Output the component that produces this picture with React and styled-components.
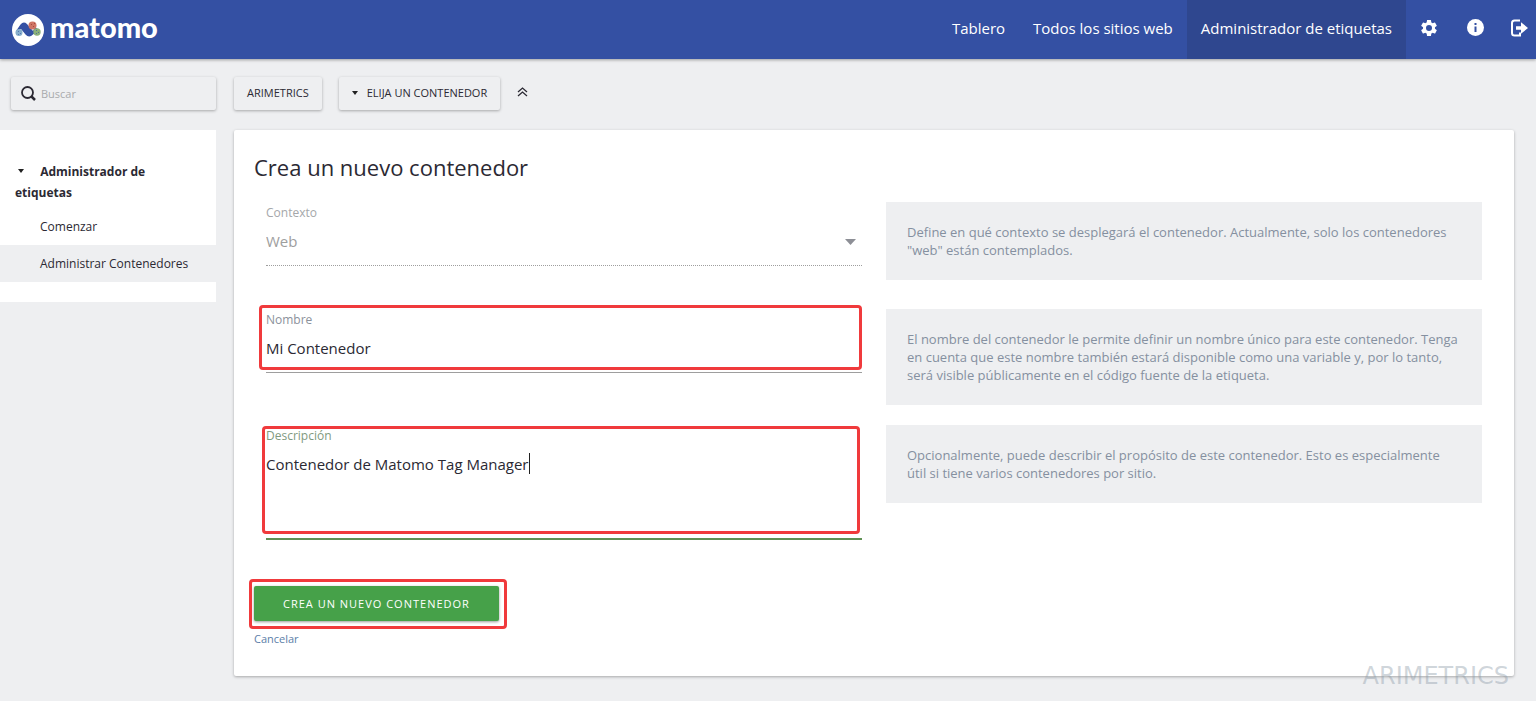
import React from 'react';
import styled, { createGlobalStyle } from 'styled-components';

const GlobalStyle = createGlobalStyle`
    *, *::before, *::after {
        box-sizing: border-box;
    }
    body {
        margin: 0;
        min-height: 100vh;
        background-color: #eeeff1;
        color: #2b2933;
        font-family: "Open Sans", "Noto Sans", sans-serif;
        font-size: 13px;
    }
    a {
        color: inherit;
        text-decoration: none;
    }
    button, input, select, textarea {
        font-family: inherit;
    }
`

const NavBar = styled.header`
    display: flex;
    justify-content: space-between;
    height: 59px;
    background-color: #3450a3;
    color: #fff;
    box-shadow: 0 1px 3px rgba(0, 0, 0, 0.35);
`

const Brand = styled.a`
    display: flex;
    align-items: center;
    gap: 6px;
    padding-left: 12px;
`

const BrandName = styled.span`
    padding-bottom: 6px;
    font-family: Lato, sans-serif;
    font-size: 29px;
    font-weight: 900;
    line-height: 32px;
`

const Menu = styled.nav`
    display: flex;
`

const MenuLink = styled.a`
    display: flex;
    align-items: center;
    padding: 0 14px 4px;
    font-size: 15px;
    background-color: ${({ $active }) => ($active ? '#2f478f' : 'transparent')};
`

const IconLink = styled.a`
    display: flex;
    align-items: center;
    justify-content: center;
    width: 46px;
    padding-bottom: 4px;

    &:last-child {
        justify-content: flex-end;
        width: 38px;
        padding-right: 8px;
    }
`

const Page = styled.div`
    display: grid;
    grid-template-columns: 216px 1fr;
    gap: 20px 18px;
    padding: 18px 22px 24px 0;
`

const SearchBox = styled.label`
    display: flex;
    align-items: center;
    gap: 5px;
    height: 33px;
    margin-left: 11px;
    padding-left: 10px;
    border-radius: 2px;
    box-shadow: 0 1px 3px rgba(0, 0, 0, 0.3);
`

const SearchInput = styled.input`
    flex: 1;
    min-width: 0;
    padding: 0;
    border: 0;
    outline: 0;
    background: none;
    font-size: 11px;

    &::placeholder {
        color: #a9abad;
    }
`

const Toolbar = styled.div`
    display: flex;
    align-items: center;
    gap: 17px;
`

const ToolButton = styled.button`
    display: flex;
    align-items: center;
    gap: 9px;
    height: 33px;
    padding: 0 13px 2px;
    border: 0;
    border-radius: 2px;
    background-color: #eeeff1;
    box-shadow: 0 1px 3px rgba(0, 0, 0, 0.3);
    color: #2b2933;
    font-size: 11px;
    text-transform: uppercase;
`

const CollapseButton = styled.button`
    display: flex;
    padding: 0 0 4px;
    border: 0;
    background: none;
`

const SideNav = styled.aside`
    align-self: start;
    padding: 31px 0 20px;
    background-color: #fff;
`

const SideTitle = styled.div`
    padding: 0 60px 5px 15px;
    font-weight: 700;
    font-size: 12px;
    line-height: 21px;

    svg {
        margin: 0 13px 3px 3px;
    }
`

const SideLink = styled.a`
    display: block;
    padding-left: 40px;
    font-size: 12px;
    line-height: 37px;
    background-color: ${({ $active }) => ($active ? '#eeeff1' : 'transparent')};
`

const Card = styled.main`
    padding: 22px 20px 27px;
    border-radius: 2px;
    background-color: #fff;
    box-shadow: 0 1px 3px rgba(0, 0, 0, 0.3);
`

const CardTitle = styled.h2`
    margin: 0 0 20px;
    font-size: 22px;
    font-weight: 400;
    line-height: 30px;
`

const Row = styled.div`
    display: grid;
    grid-template-columns: 1fr 1fr;
    align-items: start;
    gap: 24px;
    padding: 0 12px 20px;
`

// red frame laid over the part of the form to fill in
const Marked = styled.div`
    position: relative;

    &::after {
        content: "";
        position: absolute;
        inset: ${({ $inset }) => $inset};
        border: 3px solid #f03a3c;
        border-radius: 4px;
        pointer-events: none;
    }
`

const Field = styled(Marked)`
    margin-bottom: 23px;

    &::after {
        display: ${({ $inset }) => ($inset ? 'block' : 'none')};
    }
`

const FieldLabel = styled.label`
    display: block;
    height: 22px;
    color: ${({ $color }) => $color || '#8b919b'};
    font-size: 12px;
    line-height: 22px;
`

const Select = styled.select`
    display: block;
    width: 100%;
    height: 42px;
    padding: 0 0 8px;
    border: 0;
    border-bottom: 1px dotted #9e9e9e;
    border-radius: 0;
    background: none;
    appearance: none;
    color: #9e9e9e;
    font-size: 15px;
    opacity: 1;
`

const SelectArrow = styled.svg`
    position: absolute;
    top: 37px;
    right: 6px;
`

const TextInput = styled.input`
    display: block;
    width: 100%;
    height: 42px;
    padding: 0 0 8px;
    border: 0;
    border-bottom: 1px solid #9e9e9e;
    outline: 0;
    background: none;
    color: #2b2933;
    font-size: 15px;
`

const TextArea = styled.textarea`
    display: block;
    width: 100%;
    height: 93px;
    padding: 6px 0;
    border: 0;
    border-bottom: 2px solid #5f9154;
    outline: 0;
    background: none;
    resize: none;
    color: #2b2933;
    font-size: 15px;
    line-height: 22px;
`

const Caret = styled.span`
    position: absolute;
    top: 28px;
    left: 0;
    height: 21px;
    border-right: 1px solid #212121;
    color: transparent;
    font-size: 15px;
    pointer-events: none;

    &::before {
        content: "${({ $text }) => $text}";
    }
`

const Help = styled.p`
    margin: 0;
    padding: 21px;
    background-color: #eeeff1;
    color: #8590a0;
    font-size: 13px;
    line-height: 18px;
`

const Actions = styled.div`
    display: flex;
    flex-direction: column;
    align-items: flex-start;
    gap: 8px;
    padding-top: 3px;
`

const SubmitButton = styled.button`
    display: block;
    height: 35px;
    padding: 0 29px;
    border: 0;
    border-radius: 2px;
    background-color: #46a149;
    box-shadow: 0 1px 3px rgba(0, 0, 0, 0.4);
    color: #fff;
    font-size: 11px;
    letter-spacing: 1px;
    text-transform: uppercase;
`

const CancelLink = styled.a`
    color: #5c7ea8;
    font-size: 11px;
    line-height: 20px;
`

const Watermark = styled.div`
    position: absolute;
    right: 27px;
    bottom: 12px;
    color: rgba(140, 155, 168, 0.42);
    font-family: "DejaVu Sans", sans-serif;
    font-size: 24px;
    line-height: 26px;
`

const Logo = () => (
    <svg width="32" height="32" viewBox="0 0 32 32">
        <circle cx="16" cy="16" r="16" fill="#fff" />
        <path d="M4 17 L8.500 10.500 Q11.500 7 15 10 L21 17 L23 13 L27 16 L21 20.500 Q17 24.500 13.500 20.500 L9 15 Z" fill="#3450a3" />
        <circle cx="7" cy="18.500" r="3.500" fill="#86aecb" />
        <circle cx="20.500" cy="11.500" r="4" fill="#cf7565" />
        <circle cx="25" cy="18" r="3.700" fill="#8bb07a" />
        <g fill="#3450a3" opacity="0.6">
            <path d="M6 17h1v1H6zM8 19h1v1H8zM6 20h1v1H6zM24 16h1v1h-1zM26 18h1v1h-1zM24 19h1v1h-1z" />
        </g>
        <path d="M19 10h1v1h-1zM21 12h1v1h-1zM22 9h1v1h-1z" fill="#a8483d" />
    </svg>
)

const Triangle = () => (
    <svg width="6" height="4" viewBox="0 0 6 4">
        <path d="M0 0h6L3 4z" fill="#212121" />
    </svg>
)

const HELP = {
    context: 'Define en qué contexto se desplegará el contenedor. Actualmente, solo los contenedores "web" están contemplados.',
    name: 'El nombre del contenedor le permite definir un nombre único para este contenedor. Tenga en cuenta que este nombre también estará disponible como una variable y, por lo tanto, será visible públicamente en el código fuente de la etiqueta.',
    description: 'Opcionalmente, puede describir el propósito de este contenedor. Esto es especialmente útil si tiene varios contenedores por sitio.',
}

const Header = () => (
    <NavBar>
        <Brand href="#">
            <Logo />
            <BrandName>matomo</BrandName>
        </Brand>
        <Menu>
            <MenuLink href="#">Tablero</MenuLink>
            <MenuLink href="#">Todos los sitios web</MenuLink>
            <MenuLink href="#" $active>Administrador de etiquetas</MenuLink>
            <IconLink href="#" aria-label="Administración">
                <svg width="20" height="20" viewBox="0 0 24 24" fill="#fff">
                    <path d="M19.14 12.94c.04-.3.06-.61.06-.94 0-.32-.02-.64-.07-.94l2.03-1.58a.49.49 0 0 0 .12-.61l-1.92-3.32a.49.49 0 0 0-.59-.22l-2.39.96c-.5-.38-1.03-.7-1.62-.94l-.36-2.54a.48.48 0 0 0-.48-.41h-3.84c-.24 0-.43.17-.47.41l-.36 2.54c-.59.24-1.13.57-1.62.94l-2.39-.96a.49.49 0 0 0-.59.22L2.74 8.87c-.12.21-.08.47.12.61l2.03 1.58c-.05.3-.09.63-.09.94s.02.64.07.94l-2.03 1.58a.49.49 0 0 0-.12.61l1.92 3.32c.12.22.37.29.59.22l2.39-.96c.5.38 1.03.7 1.62.94l.36 2.54c.05.24.24.41.48.41h3.84c.24 0 .44-.17.47-.41l.36-2.54c.59-.24 1.13-.56 1.62-.94l2.39.96c.22.08.47 0 .59-.22l1.92-3.32a.49.49 0 0 0-.12-.61zM12 15.600a3.600 3.600 0 1 1 0-7.200 3.600 3.600 0 0 1 0 7.200z" />
                </svg>
            </IconLink>
            <IconLink href="#" aria-label="Ayuda">
                <svg width="17" height="17" viewBox="0 0 17 17">
                    <circle cx="8.500" cy="8.500" r="8.500" fill="#fff" />
                    <path d="M7.500 4h2v2h-2zM7.500 7.500h2V13h-2z" fill="#3450a3" />
                </svg>
            </IconLink>
            <IconLink href="#" aria-label="Salir">
                <svg width="17" height="18" viewBox="0 0 17 18">
                    <path d="M9 1.500H3.500Q1 1.500 1 4v10Q1 16.500 3.500 16.500H9v-3" fill="none" stroke="#fff" strokeWidth="2" />
                    <path d="M5 7.300h5V3.200l7 5.800-7 5.800v-4.100H5z" fill="#fff" />
                </svg>
            </IconLink>
        </Menu>
    </NavBar>
)

const SideMenu = () => (
    <SideNav>
        <SideTitle>
            <Triangle />
            {' '}Administrador de etiquetas
        </SideTitle>
        <SideLink href="#">Comenzar</SideLink>
        <SideLink href="#" $active>Administrar Contenedores</SideLink>
    </SideNav>
)

const ContainerForm = () => {
    const [description, setDescription] = React.useState('Contenedor de Matomo Tag Manager')

    return (
        <Card>
            <CardTitle>Crea un nuevo contenedor</CardTitle>
            <Row>
                <Field>
                    <FieldLabel htmlFor="context" $color="#a5a7aa">Contexto</FieldLabel>
                    <Select id="context" disabled>
                        <option>Web</option>
                    </Select>
                    <SelectArrow width="11" height="6" viewBox="0 0 11 6">
                        <path d="M0 0h11L5.500 6z" fill="#8d8f96" />
                    </SelectArrow>
                </Field>
                <Help>{HELP.context}</Help>
            </Row>
            <Row>
                <Field $inset="-4px 0 3px -7px">
                    <FieldLabel htmlFor="name">Nombre</FieldLabel>
                    <TextInput id="name" defaultValue="Mi Contenedor" />
                </Field>
                <Help>{HELP.name}</Help>
            </Row>
            <Row>
                <Field $inset="1px 2px 6px -4px">
                    <FieldLabel htmlFor="description" $color="#7f9a80">Descripción</FieldLabel>
                    <TextArea
                        id="description"
                        value={description}
                        onChange={(e) => setDescription(e.target.value)}
                    />
                    <Caret $text={description} />
                </Field>
                <Help>{HELP.description}</Help>
            </Row>
            <Actions>
                <Marked $inset="-7px -8px -8px -5px">
                    <SubmitButton type="button">Crea un nuevo contenedor</SubmitButton>
                </Marked>
                <CancelLink href="#">Cancelar</CancelLink>
            </Actions>
        </Card>
    )
}

const Shell = styled.div`
    position: relative;
    min-height: 100vh;
`

const App = () => (
    <Shell>
        <GlobalStyle />
        <Header />
        <Page>
            <SearchBox>
                <svg width="15" height="15" viewBox="0 0 15 15" fill="none" stroke="#2b2933">
                    <circle cx="6.500" cy="6.500" r="5.500" strokeWidth="1.800" />
                    <path d="M10.500 10.500l3.500 3.500" strokeWidth="2.500" />
                </svg>
                <SearchInput type="text" placeholder="Buscar" aria-label="Buscar" />
            </SearchBox>
            <Toolbar>
                <ToolButton type="button">Arimetrics</ToolButton>
                <ToolButton type="button">
                    <Triangle />
                    Elija un contenedor
                </ToolButton>
                <CollapseButton type="button" aria-label="Contraer">
                    <svg width="11" height="10" viewBox="0 0 11 10" fill="none" stroke="#2b2933" strokeWidth="1.300">
                        <path d="M1 5l4.500-4L10 5M1 9l4.500-4L10 9" />
                    </svg>
                </CollapseButton>
            </Toolbar>
            <SideMenu />
            <ContainerForm />
        </Page>
        <Watermark>ARIMETRICS</Watermark>
    </Shell>
)

export default App;
